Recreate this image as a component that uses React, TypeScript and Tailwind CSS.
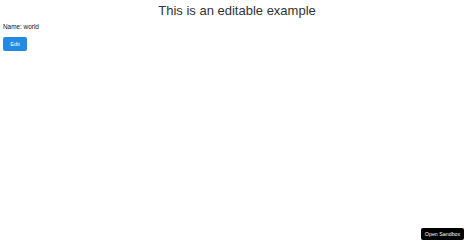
export default function App() {
  return (
    <div className="relative h-[248px] w-[474px] bg-white font-['Liberation_Sans',Arial,sans-serif]">
      <h1 className="pt-[3px] text-center text-[13px] leading-[16px] text-[#333]">This is an editable example</h1>
      <div className="px-[3px]">
        <p className="mt-[4px] text-[6.4px] leading-[8px] text-[#111]">Name: world</p>
        <button className="mt-[6px] block h-[14px] w-[24px] rounded-[2px] bg-[#2489e3] text-[5.5px] leading-[14px] text-white">
          Edit
        </button>
      </div>
      <button className="absolute bottom-[8px] right-[10px] h-[12px] w-[43px] rounded-[2px] bg-black text-[5.3px] leading-[12px] text-white">
        Open Sandbox
      </button>
    </div>
  )
}
